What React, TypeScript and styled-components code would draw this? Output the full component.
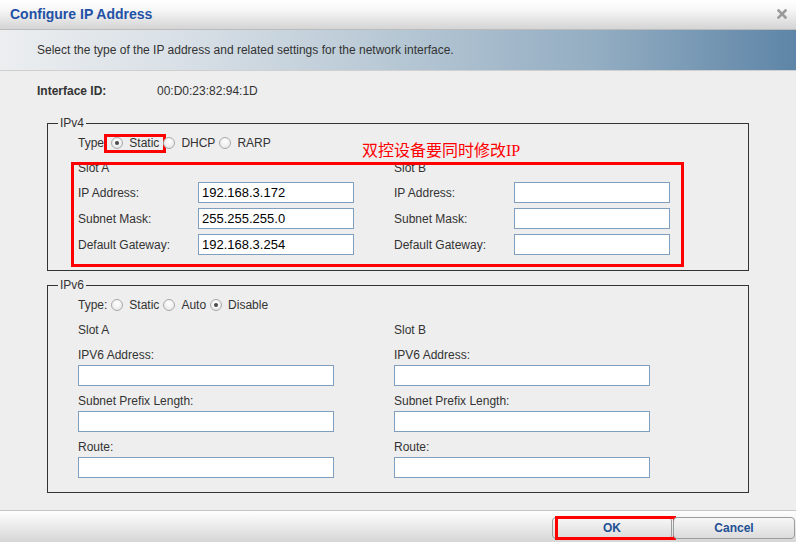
import React from "react";
import styled, { createGlobalStyle } from "styled-components";

const GlobalStyle = createGlobalStyle`
  html, body {
    margin: 0;
    padding: 0;
    background: #eeeeee;
  }
  body {
    font-family: "Liberation Sans", Arial, sans-serif;
    font-size: 12px;
    color: #333333;
  }
  * {
    box-sizing: border-box;
  }
`;

const Dialog = styled.div`
  width: 796px;
  height: 542px;
  display: flex;
  flex-direction: column;
  background: #eeeeee;
  overflow: hidden;
`;

const TitleBar = styled.div`
  height: 30px;
  flex: none;
  display: flex;
  align-items: center;
  justify-content: space-between;
  padding: 0 9px 1px 10px;
  background: linear-gradient(#ffffff, #f6f6f6 35%, #d4d4d4);
  border-bottom: 1px solid #bcbcbc;
`;

const Title = styled.h1`
  margin: 0;
  font-size: 14px;
  font-weight: 700;
  color: #1f51a6;
`;

const CloseButton = styled.span`
  display: flex;
  width: 10px;
  height: 10px;
`;

const Banner = styled.div`
  height: 41px;
  flex: none;
  display: flex;
  align-items: center;
  padding-left: 37px;
  background: linear-gradient(to right, #eceef0 0%, #d6dee5 25%, #b6c7d4 50%, #93adc2 75%, #5e85a7 100%);
  border-bottom: 1px solid #cfcfcf;
  color: #333333;
`;

const Body = styled.div`
  flex: 1;
  padding: 11px 47px 0 37px;
`;

const InterfaceRow = styled.div`
  height: 18px;
  display: flex;
  align-items: center;
`;

const InterfaceLabel = styled.span`
  width: 120px;
  font-weight: 700;
`;

const Group = styled.fieldset<{ $top: number; $bottom: number }>`
  margin: ${(p) => p.$top}px 0 0 10px;
  padding: 0 0 ${(p) => p.$bottom}px 10px;
  border: 1px solid #333333;
  min-width: 0;
`;

const Legend = styled.legend`
  padding: 0 2px;
  line-height: 14px;
  color: #333333;
`;

const GroupInner = styled.div<{ $pad: number }>`
  padding: ${(p) => p.$pad}px 0 0 20px;
`;

const TypeRow = styled.div`
  height: 18px;
  display: flex;
  align-items: center;
`;

const Option = styled.label`
  position: relative;
  display: flex;
  align-items: center;
`;

const Radio = styled.span<{ $checked?: boolean }>`
  width: 12px;
  height: 12px;
  margin: 0 6px 0 4px;
  border-radius: 50%;
  border: 1px solid #a9a9a9;
  background: radial-gradient(circle at 50% 35%, #ffffff, #e2e2e2);
  display: inline-flex;
  align-items: center;
  justify-content: center;

  &::after {
    content: "";
    width: 4px;
    height: 4px;
    border-radius: 50%;
    background: #4a4a4a;
    display: ${(p) => (p.$checked ? "block" : "none")};
  }
`;

const SlotGrid = styled.div<{ $top: number }>`
  position: relative;
  width: max-content;
  margin-top: ${(p) => p.$top}px;
  display: grid;
  grid-template-columns: 316px 316px;
`;

const SlotColumn = styled.div<{ $gap: number }>`
  display: flex;
  flex-direction: column;
  gap: ${(p) => p.$gap}px;
`;

const SlotTitle = styled.div<{ $after: number }>`
  line-height: 14px;
  margin-bottom: ${(p) => p.$after}px;
`;

const InlineField = styled.div`
  display: grid;
  grid-template-columns: 120px 156px;
  align-items: center;
`;

const StackField = styled.div`
  display: flex;
  flex-direction: column;
  gap: 3px;
`;

const FieldLabel = styled.span`
  line-height: 14px;
`;

const TextBox = styled.input<{ $width: number }>`
  width: ${(p) => p.$width}px;
  height: 21px;
  margin: 0;
  padding: 0 3px;
  border: 1px solid #7f9fbe;
  background: #ffffff;
  font-family: "Liberation Sans", Arial, sans-serif;
  font-size: 13px;
  color: #000000;
  outline: none;
`;

const Footer = styled.div`
  height: 32px;
  flex: none;
  display: flex;
  justify-content: flex-end;
  align-items: flex-start;
  gap: 1px;
  padding: 6px 1px 0 0;
  border-top: 1px solid #c4c4c4;
  background: linear-gradient(#ffffff, #f2f2f2 30%, #d6d6d6);
`;

const Button = styled.button<{ $width: number }>`
  position: relative;
  width: ${(p) => p.$width}px;
  height: 22px;
  border: 1px solid #9c9c9c;
  border-radius: 4px;
  background: linear-gradient(#f7f7f7, #e9e9e9 50%, #dcdcdc);
  font-family: "Liberation Sans", Arial, sans-serif;
  font-size: 12px;
  font-weight: 700;
  color: #1f4f94;
  padding: 0;
`;

/* red annotation marks drawn over the screenshot */
const Mark = styled.span<{ $inset: string }>`
  position: absolute;
  inset: ${(p) => p.$inset};
  border: 3px solid #ff0000;
  pointer-events: none;
`;

const Note = styled.span`
  position: absolute;
  top: -19px;
  left: 284px;
  font-family: "Liberation Serif", "Noto Sans CJK SC", serif;
  font-size: 16px;
  line-height: 18px;
  color: #ff0000;
  white-space: nowrap;
`;

type Choice = { label: string; checked?: boolean; marked?: boolean };

const TypeChoices = ({ choices }: { choices: Choice[] }) => (
  <TypeRow>
    <span>Type:</span>
    {choices.map((c) => (
      <Option key={c.label}>
        <Radio $checked={c.checked} />
        {c.label}
        {c.marked && <Mark $inset="-2px -7px -3px -3px" />}
      </Option>
    ))}
  </TypeRow>
);

const ipv4A = [
  { label: "IP Address:", value: "192.168.3.172" },
  { label: "Subnet Mask:", value: "255.255.255.0" },
  { label: "Default Gateway:", value: "192.168.3.254" },
];

const ipv4B = [
  { label: "IP Address:", value: "" },
  { label: "Subnet Mask:", value: "" },
  { label: "Default Gateway:", value: "" },
];

const ipv6Labels = ["IPV6 Address:", "Subnet Prefix Length:", "Route:"];

const App = () => {
  return (
    <>
      <GlobalStyle />
      <Dialog>
        <TitleBar>
          <Title>Configure IP Address</Title>
          <CloseButton>
            <svg width="10" height="10" viewBox="0 0 10 10">
              <path
                d="M1.5 1.5 L8.5 8.5 M8.5 1.5 L1.5 8.5"
                stroke="#9a9a9a"
                strokeWidth="2.6"
                strokeLinecap="square"
              />
            </svg>
          </CloseButton>
        </TitleBar>

        <Banner>
          Select the type of the IP address and related settings for the network interface.
        </Banner>

        <Body>
          <InterfaceRow>
            <InterfaceLabel>Interface ID:</InterfaceLabel>
            <span>00:D0:23:82:94:1D</span>
          </InterfaceRow>

          <Group $top={16} $bottom={15}>
            <Legend>IPv4</Legend>
            <GroupInner $pad={4}>
              <TypeChoices
                choices={[
                  { label: "Static", checked: true, marked: true },
                  { label: "DHCP" },
                  { label: "RARP" },
                ]}
              />
              <SlotGrid $top={9}>
                <Note>双控设备要同时修改IP</Note>
                <SlotColumn $gap={5}>
                  <SlotTitle $after={2}>Slot A</SlotTitle>
                  {ipv4A.map((f) => (
                    <InlineField key={f.label}>
                      <FieldLabel>{f.label}</FieldLabel>
                      <TextBox $width={156} defaultValue={f.value} />
                    </InlineField>
                  ))}
                </SlotColumn>
                <SlotColumn $gap={5}>
                  <SlotTitle $after={2}>Slot B</SlotTitle>
                  {ipv4B.map((f) => (
                    <InlineField key={f.label}>
                      <FieldLabel>{f.label}</FieldLabel>
                      <TextBox $width={156} defaultValue={f.value} />
                    </InlineField>
                  ))}
                </SlotColumn>
                <Mark $inset="1px 26px -12px -7px" />
              </SlotGrid>
            </GroupInner>
          </Group>

          <Group $top={7} $bottom={14}>
            <Legend>IPv6</Legend>
            <GroupInner $pad={4}>
              <TypeChoices
                choices={[
                  { label: "Static" },
                  { label: "Auto" },
                  { label: "Disable", checked: true },
                ]}
              />
              <SlotGrid $top={9}>
                {["Slot A", "Slot B"].map((slot) => (
                  <SlotColumn key={slot} $gap={8}>
                    <SlotTitle $after={3}>{slot}</SlotTitle>
                    {ipv6Labels.map((label) => (
                      <StackField key={label}>
                        <FieldLabel>{label}</FieldLabel>
                        <TextBox $width={256} />
                      </StackField>
                    ))}
                  </SlotColumn>
                ))}
              </SlotGrid>
            </GroupInner>
          </Group>
        </Body>

        <Footer>
          <Button $width={120}>
            OK
            <Mark $inset="-2px -5px -2px 2px" />
          </Button>
          <Button $width={122}>Cancel</Button>
        </Footer>
      </Dialog>
    </>
  );
};

export default App;
